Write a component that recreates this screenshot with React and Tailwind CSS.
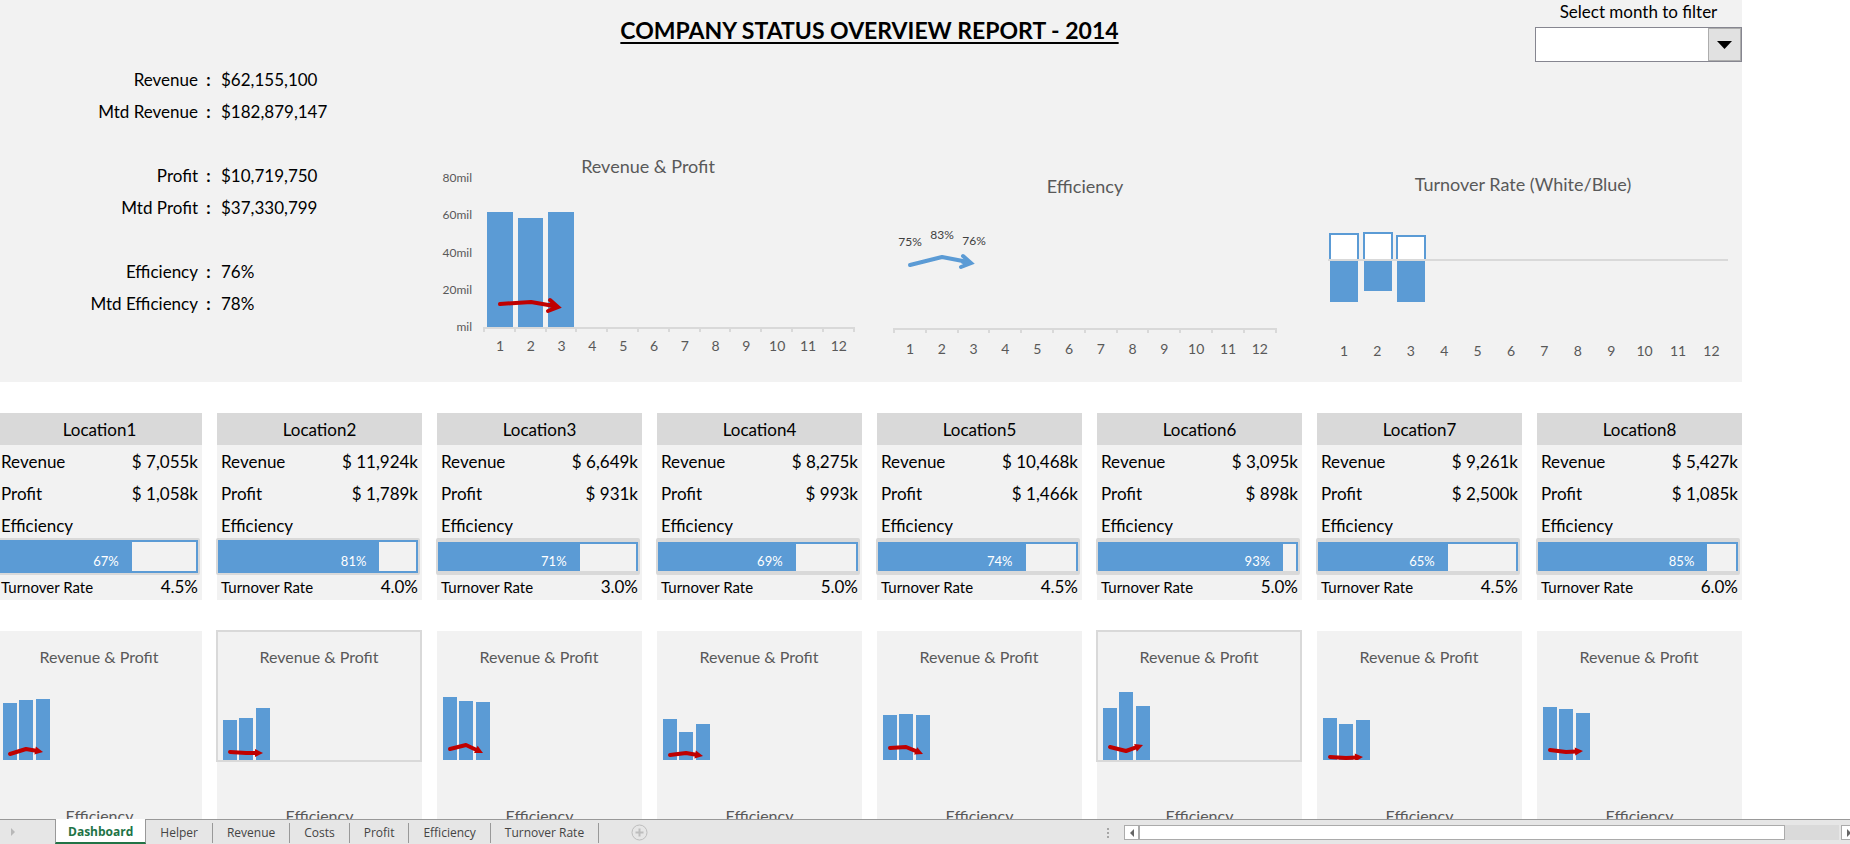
import { useState } from 'react';

const MONTHS = [1, 2, 3, 4, 5, 6, 7, 8, 9, 10, 11, 12];

const SUMMARY = [
  [['Revenue', '$62,155,100'], ['Mtd Revenue', '$182,879,147']],
  [['Profit', '$10,719,750'], ['Mtd Profit', '$37,330,799']],
  [['Efficiency', '76%'], ['Mtd Efficiency', '78%']],
];

// bars and line are pixel heights above the chart baseline
const LOCATIONS = [
  { name: 'Location1', revenue: '$ 7,055k', profit: '$ 1,058k', efficiency: 67, turnover: '4.5%', bars: [57, 60, 61], line: [6, 11, 8], thin: true },
  { name: 'Location2', revenue: '$ 11,924k', profit: '$ 1,789k', efficiency: 81, turnover: '4.0%', bars: [40, 42, 52], line: [8, 7, 7], thin: true, framed: true },
  { name: 'Location3', revenue: '$ 6,649k', profit: '$ 931k', efficiency: 71, turnover: '3.0%', bars: [63, 59, 58], line: [11, 15, 7] },
  { name: 'Location4', revenue: '$ 8,275k', profit: '$ 993k', efficiency: 69, turnover: '5.0%', bars: [41, 28, 36], line: [5, 7, 4] },
  { name: 'Location5', revenue: '$ 10,468k', profit: '$ 1,466k', efficiency: 74, turnover: '4.5%', bars: [45, 46, 45], line: [12, 13, 6] },
  { name: 'Location6', revenue: '$ 3,095k', profit: '$ 898k', efficiency: 93, turnover: '5.0%', bars: [52, 68, 54], line: [13, 9, 15], framed: true },
  { name: 'Location7', revenue: '$ 9,261k', profit: '$ 2,500k', efficiency: 65, turnover: '4.5%', bars: [42, 36, 40], line: [3, 2, 3] },
  { name: 'Location8', revenue: '$ 5,427k', profit: '$ 1,085k', efficiency: 85, turnover: '6.0%', bars: [53, 51, 47], line: [10, 8, 9] },
];

const SHEETS = ['Dashboard', 'Helper', 'Revenue', 'Costs', 'Profit', 'Efficiency', 'Turnover Rate'];

function MonthLabels({ x, y, step }) {
  return MONTHS.map((m, i) => (
    <text key={m} x={x + i * step} y={y} textAnchor="middle" className="fill-[#595959] text-[14px]">
      {m}
    </text>
  ));
}

function Axis({ x, y, step }) {
  return (
    <g className="fill-[#d9d9d9]" shapeRendering="crispEdges">
      <rect x={x} y={y} width={step * 12 + 1} height="2" />
      {[0, ...MONTHS].map((m) => (
        <rect key={m} x={Math.round(x + m * step)} y={y} width="2" height="5" />
      ))}
    </g>
  );
}

function RevenueChart() {
  return (
    <svg viewBox="0 0 440 252" className="w-[440px]" role="img" aria-label="Revenue and profit by month">
      <text x="218" y="43" textAnchor="middle" className="fill-[#595959] text-[18px]">Revenue &amp; Profit</text>
      {['80mil', '60mil', '40mil', '20mil', 'mil'].map((label, i) => (
        <text key={label} x="42" y={52 + Math.round(i * 37.3)} textAnchor="end" className="fill-[#595959] text-[12px]">
          {label}
        </text>
      ))}
      <g className="fill-[#5b9bd5]">
        <rect x="57" y="82" width="26" height="115" />
        <rect x="88" y="88" width="25" height="109" />
        <rect x="118" y="82" width="26" height="115" />
      </g>
      <Axis x={53} y={197} step={30.8} />
      <g className="fill-none stroke-[#c00000] stroke-4" strokeLinecap="round">
        <path d="M70 174 L101 172 L124 176" strokeLinejoin="round" />
        <path d="M120 170 L128 177 L118 181" strokeLinejoin="miter" />
        <path d="M120 175 L126 177" />
      </g>
      <MonthLabels x={70} y={221} step={30.8} />
    </svg>
  );
}

function EfficiencyChart() {
  return (
    <svg viewBox="0 0 440 252" className="w-[440px]" role="img" aria-label="Efficiency by month">
      <text x="215" y="63" textAnchor="middle" className="fill-[#595959] text-[18px]">Efficiency</text>
      <g className="fill-[#404040] text-[12px]" textAnchor="middle">
        <text x="40" y="116">75%</text>
        <text x="72" y="109">83%</text>
        <text x="104" y="115">76%</text>
      </g>
      <g className="fill-none stroke-[#5b9bd5] stroke-4" strokeLinecap="round">
        <path d="M40 135 L72 127 L98 132" strokeLinejoin="round" />
        <path d="M93 126 L101 133 L91 137" strokeLinejoin="miter" />
        <path d="M93 132 L99 133" />
      </g>
      <Axis x={23} y={198} step={31.8} />
      <MonthLabels x={40} y={224} step={31.8} />
    </svg>
  );
}

function TurnoverChart() {
  return (
    <svg viewBox="0 0 432 252" className="w-[432px]" role="img" aria-label="Turnover rate by month">
      <text x="213" y="61" textAnchor="middle" className="fill-[#595959] text-[18px]">Turnover Rate (White/Blue)</text>
      <g className="fill-white stroke-[#5b9bd5] stroke-2">
        <rect x="20" y="104" width="28" height="26" />
        <rect x="54" y="103" width="28" height="27" />
        <rect x="87" y="106" width="28" height="24" />
      </g>
      <g className="fill-[#5b9bd5]">
        <rect x="20" y="130" width="28" height="42" />
        <rect x="54" y="130" width="28" height="31" />
        <rect x="87" y="130" width="28" height="42" />
      </g>
      <rect x="18" y="129" width="400" height="2" className="fill-[#d9d9d9]" />
      <MonthLabels x={34} y={226} step={33.4} />
    </svg>
  );
}

function Summary() {
  return (
    <div className="flex w-[433px] flex-col gap-8 text-[17px] leading-8">
      {SUMMARY.map((group) => (
        <dl key={group[0][0]}>
          {group.map(([label, value]) => (
            <div key={label} className="flex">
              <dt className="w-[201px] text-right">{label}</dt>
              <span className="w-[21px] text-center font-bold">:</span>
              <dd className="pl-0.5">{value}</dd>
            </div>
          ))}
        </dl>
      ))}
    </div>
  );
}

function MonthFilter() {
  const [month, setMonth] = useState('');

  return (
    <div className="flex w-[207px] flex-col justify-self-end">
      <label htmlFor="month" className="h-[27px] text-center text-[17px] leading-6">
        Select month to filter
      </label>
      <div className="relative">
        <select
          id="month"
          value={month}
          onChange={(e) => setMonth(e.target.value)}
          className="block h-[35px] w-full appearance-none border border-[#868690] bg-white px-2"
        >
          <option value=""></option>
          {MONTHS.map((m) => (
            <option key={m} value={m}>{m}</option>
          ))}
        </select>
        <span className="pointer-events-none absolute inset-y-px right-px flex w-[33px] items-center justify-center border border-[#adadad] bg-[#e1e1e1]">
          <svg viewBox="0 0 15 8" className="h-2 w-[15px]">
            <path d="M0 0 H15 L7.5 8 Z" />
          </svg>
        </span>
      </div>
    </div>
  );
}

function LocationCard({ location }) {
  const { name, revenue, profit, efficiency, turnover, thin } = location;

  return (
    <section className="bg-[#f2f2f2] text-[17px] leading-8">
      <h2 className="h-8 bg-[#d9d9d9] pt-px text-center">{name}</h2>
      <dl className="px-1 pt-px">
        <div className="flex justify-between">
          <dt>Revenue</dt>
          <dd>{revenue}</dd>
        </div>
        <div className="flex justify-between">
          <dt>Profit</dt>
          <dd>{profit}</dd>
        </div>
        <dt className="h-7">Efficiency</dt>
      </dl>
      <div className={thin ? '-ml-px mr-0.5 h-[37px] rounded-xs border-2 border-[#d9d9d9]' : '-ml-px mr-0.5 h-[37px] rounded-xs border-x-2 border-y-4 border-[#d9d9d9]'}>
        <div className={thin ? 'h-full border-y-2 border-r-2 border-[#5b9bd5]' : 'h-full border-t-2 border-r-2 border-[#5b9bd5]'}>
          <div
            className="flex h-full items-end justify-end bg-[#5b9bd5] pr-[13px] text-[13px] leading-5 text-white"
            style={{ width: `calc(${efficiency}% + 1px)` }}
          >
            {efficiency}%
          </div>
        </div>
      </div>
      <dl className="flex h-[25px] items-center justify-between px-1 pb-0.5">
        <dt className="text-[15px]">Turnover Rate</dt>
        <dd>{turnover}</dd>
      </dl>
    </section>
  );
}

function LocationChart({ location }) {
  const { bars, line, framed } = location;
  const [a, b, c] = line.map((v) => 91 - v);
  const angle = (Math.atan2(c - b, 16) * 180) / Math.PI;

  return (
    <section className="h-[220px] bg-[#f2f2f2] text-center text-[16px] leading-6 text-[#595959]">
      <div className={framed ? '-ml-px -mt-px border-2 border-[#d9d9d9] pt-[13px]' : '-ml-px -mt-px border-2 border-transparent pt-[13px]'}>
        <h3>Revenue &amp; Profit</h3>
        <svg width="201" height="91" viewBox="0 0 201 91" className="block">
          {bars.map((h, i) => (
            <rect key={i} x={[5, 21, 38][i]} y={91 - h} width="14" height={h} className="fill-[#5b9bd5]" />
          ))}
          <path
            d={`M12 ${a} L28 ${b} L38 ${b + (c - b) * 0.6}`}
            className="fill-none stroke-[#c00000] stroke-4"
            strokeLinecap="round"
            strokeLinejoin="round"
          />
          <path d="M0 0 L-8 -4 V4 Z" transform={`translate(45 ${c}) rotate(${angle})`} className="fill-[#c00000]" />
        </svg>
      </div>
      <h3 className="mt-[42px]">Efficiency</h3>
    </section>
  );
}

function SheetTabs() {
  const [active, setActive] = useState('Dashboard');

  return (
    <footer className="flex h-[25px] shrink-0 border-t border-[#999999] bg-[#e6e6e6] font-['Open_Sans',sans-serif] text-[12px] text-[#444444]">
      <button aria-label="Next sheet" className="w-[55px] shrink-0 pl-[11px]">
        <svg viewBox="0 0 4 8" className="h-2 w-1 fill-[#b8b8b8]">
          <path d="M0 0 L4 4 L0 8 Z" />
        </svg>
      </button>
      <nav className="flex shrink-0 items-start">
        {SHEETS.map((sheet) => (
          <button
            key={sheet}
            onClick={() => setActive(sheet)}
            className={
              sheet === active
                ? '-mt-px h-[25px] border-x border-b-2 border-x-[#999999] border-b-[#217346] bg-white px-3 pt-[3px] font-bold text-[#217346]'
                : 'mt-[3px] h-5 border-r border-[#999999] px-3.5'
            }
          >
            {sheet}
          </button>
        ))}
      </nav>
      <button aria-label="New sheet" className="ml-8 shrink-0">
        <svg viewBox="0 0 17 17" className="size-[17px] fill-none stroke-[#bdbdbd]">
          <circle cx="8.5" cy="8.5" r="7.5" />
          <path d="M8.5 4.5 V12.5 M4.5 8.5 H12.5" strokeWidth="2" />
        </svg>
      </button>
      <div className="ml-auto flex w-[743px] items-center pt-px">
        <svg viewBox="0 0 2 10" className="h-[10px] w-0.5 fill-[#a6a6a6]">
          <path d="M0 0 H2 V2 H0 Z M0 4 H2 V6 H0 Z M0 8 H2 V10 H0 Z" />
        </svg>
        <button aria-label="Scroll left" className="ml-[15px] flex h-[15px] w-[15px] items-center justify-center border border-[#ababab] bg-white">
          <svg viewBox="0 0 4 8" className="h-2 w-1 fill-[#666666]">
            <path d="M4 0 L0 4 L4 8 Z" />
          </svg>
        </button>
        <div className="h-[15px] flex-1 bg-[#dadada] pr-[54px]">
          <div className="h-full border border-[#ababab] bg-white" />
        </div>
        <button aria-label="Scroll right" className="-mr-1.5 ml-0.5 flex h-[15px] w-[15px] items-center justify-center border border-[#ababab] bg-white">
          <svg viewBox="0 0 4 8" className="h-2 w-1 fill-[#666666]">
            <path d="M0 0 L4 4 L0 8 Z" />
          </svg>
        </button>
      </div>
    </footer>
  );
}

export default function App() {
  return (
    <div className="flex h-screen flex-col overflow-hidden bg-white font-[Lato,sans-serif] text-black">
      <main className="-ml-[3px] min-h-0 flex-1 overflow-hidden pr-[108px]">
        <div className="h-[382px] bg-[#f2f2f2]">
          <header className="grid h-16 grid-cols-[1fr_auto_1fr] items-start">
            <span />
            <h1 className="pt-4 text-[23px] leading-7 font-bold underline decoration-2 underline-offset-3">
              COMPANY STATUS OVERVIEW REPORT - 2014
            </h1>
            <MonthFilter />
          </header>
          <div className="flex">
            <Summary />
            <div className="flex flex-1 pt-[66px]">
              <RevenueChart />
              <EfficiencyChart />
              <TurnoverChart />
            </div>
          </div>
        </div>
        <div className="mt-[31px] grid grid-cols-8 gap-[15px]">
          {LOCATIONS.map((location) => (
            <LocationCard key={location.name} location={location} />
          ))}
        </div>
        <div className="mt-[31px] grid grid-cols-8 gap-[15px]">
          {LOCATIONS.map((location) => (
            <LocationChart key={location.name} location={location} />
          ))}
        </div>
      </main>
      <SheetTabs />
    </div>
  );
}
